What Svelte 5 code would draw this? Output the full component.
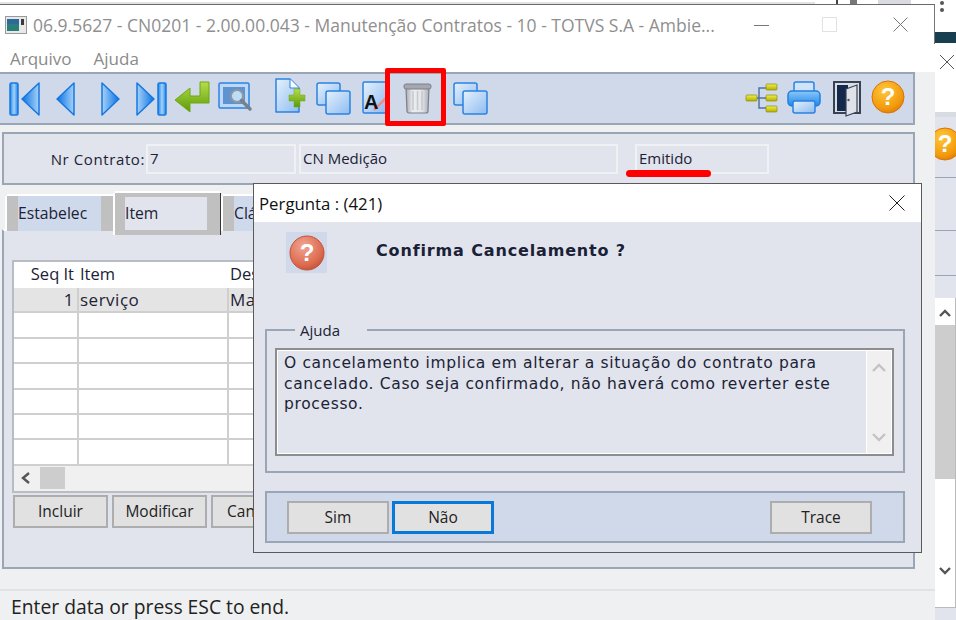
<script>
  const rows = [
    { seq: '1', item: 'serviço', desc: 'Ma', selected: true },
    { seq: '', item: '', desc: '' },
    { seq: '', item: '', desc: '' },
    { seq: '', item: '', desc: '' },
    { seq: '', item: '', desc: '' },
    { seq: '', item: '', desc: '' },
    { seq: '', item: '', desc: '' }
  ];
  const helpText = 'O cancelamento implica em alterar a situação do contrato para cancelado. Caso seja confirmado, não haverá como reverter este processo.';
</script>

<svg class="defs" width="0" height="0" aria-hidden="true">
  <defs>
    <linearGradient id="navL" x1="0" x2="1" y1="0" y2="0"><stop offset="0" stop-color="#0b72e6"/><stop offset="1" stop-color="#a6d2f7"/></linearGradient>
    <linearGradient id="navR" x1="0" x2="1" y1="0" y2="0"><stop offset="0" stop-color="#a6d2f7"/><stop offset="1" stop-color="#0b72e6"/></linearGradient>
    <linearGradient id="navB" x1="0" x2="1" y1="0" y2="0"><stop offset="0" stop-color="#1f86ea"/><stop offset=".5" stop-color="#a6d2f7"/><stop offset="1" stop-color="#1f86ea"/></linearGradient>
    <linearGradient id="paper" x1="0" x2="1" y1="0" y2="1"><stop offset="0" stop-color="#e6f1fc"/><stop offset="1" stop-color="#8dbcf1"/></linearGradient>
    <linearGradient id="green" x1="0" x2="0" y1="0" y2="1"><stop offset="0" stop-color="#b5de4a"/><stop offset="1" stop-color="#5c9a0a"/></linearGradient>
    <linearGradient id="can" x1="0" x2="1" y1="0" y2="0"><stop offset="0" stop-color="#a9acb4"/><stop offset=".3" stop-color="#ecedf0"/><stop offset=".7" stop-color="#e4e5e8"/><stop offset="1" stop-color="#a9acb4"/></linearGradient>
    <linearGradient id="print" x1="0" x2="0" y1="0" y2="1"><stop offset="0" stop-color="#8cc8f8"/><stop offset="1" stop-color="#1f86e8"/></linearGradient>
    <radialGradient id="orange" cx=".4" cy=".3" r=".8"><stop offset="0" stop-color="#ffc73a"/><stop offset=".7" stop-color="#f29a0c"/><stop offset="1" stop-color="#d9730a"/></radialGradient>
    <radialGradient id="redball" cx=".4" cy=".3" r=".8"><stop offset="0" stop-color="#f2a594"/><stop offset=".7" stop-color="#dc6a4e"/><stop offset="1" stop-color="#bb4a30"/></radialGradient>
    <linearGradient id="yellow" x1="0" x2="0" y1="0" y2="1"><stop offset="0" stop-color="#eef04a"/><stop offset="1" stop-color="#b5b000"/></linearGradient>
  </defs>
</svg>

<div class="desktop">
  <div class="top-strip">
    <span class="strip-line"></span>
    <span class="strip-a"></span>
    <span class="strip-b"></span>
    <span class="strip-c"></span>
  </div>

  <div class="back-window">
    <div class="back-top">
      <span class="dot"></span>
      <span class="dot"></span>
    </div>
    <div class="back-teal"></div>
    <div class="back-title">
      <svg width="16" height="16" viewBox="0 0 16 16"><path d="M1 1 15 15M15 1 1 15" stroke="#555" stroke-width="1" fill="none"/></svg>
    </div>
    <div class="back-panel">
      <svg class="back-help" width="34" height="34" viewBox="0 0 34 34">
        <circle cx="17" cy="17" r="16" fill="url(#orange)" stroke="#d9730a"/>
        <text x="17" y="25" text-anchor="middle" class="q">?</text>
      </svg>
    </div>
    <div class="back-panel short"></div>
    <div class="back-panel tiny"></div>
    <div class="back-scroll">
      <svg class="chev" width="12" height="8" viewBox="0 0 12 8"><path d="M1 7 6 2l5 5" stroke="#555" stroke-width="2.4" fill="none"/></svg>
      <div class="back-thumb"></div>
      <svg class="chev down" width="12" height="8" viewBox="0 0 12 8"><path d="M1 1l5 5 5-5" stroke="#555" stroke-width="2.4" fill="none"/></svg>
    </div>
  </div>

  <div class="window">
    <div class="titlebar">
      <svg class="app-icon" width="22" height="18" viewBox="0 0 22 18">
        <rect x=".5" y=".5" width="21" height="17" fill="#e8e8e8" stroke="#9a9a9a"/>
        <rect x="2" y="3" width="12" height="12" fill="#2b7f78"/>
        <rect x="2" y="3" width="12" height="5" fill="#2c6a9c"/>
        <rect x="16" y="3" width="3" height="6" fill="#3a3a3a"/>
      </svg>
      <span class="title-text">06.9.5627 - CN0201 - 2.00.00.043 - Manutenção Contratos - 10 - TOTVS S.A - Ambie...</span>
      <div class="win-controls">
        <svg width="15" height="16" viewBox="0 0 15 16"><path d="M0 8.5h15" stroke="#777" fill="none"/></svg>
        <svg width="15" height="16" viewBox="0 0 15 16"><rect x=".5" y=".5" width="14" height="14" stroke="#e2e2e2" fill="none"/></svg>
        <svg width="15" height="16" viewBox="0 0 15 16"><path d="M.5.5l14 14M14.5.5l-14 14" stroke="#777" fill="none"/></svg>
      </div>
    </div>
    <div class="menubar">
      <span>Arquivo</span>
      <span>Ajuda</span>
    </div>

    <div class="toolbar">
      <svg class="ico first" width="32" height="34" viewBox="0 0 32 34">
        <rect x="1" y="1" width="8" height="32" rx="1.5" fill="url(#navB)" stroke="#1478e2" stroke-width="1.5"/>
        <path d="M30 1v32L13 17Z" fill="url(#navL)" stroke="#1478e2" stroke-width="1.5" stroke-linejoin="round"/>
      </svg>
      <svg class="ico prev" width="20" height="34" viewBox="0 0 20 34">
        <path d="M18 1v32L1 17Z" fill="url(#navL)" stroke="#1478e2" stroke-width="1.5" stroke-linejoin="round"/>
      </svg>
      <svg class="ico next" width="20" height="34" viewBox="0 0 20 34">
        <path d="M2 1v32L19 17Z" fill="url(#navR)" stroke="#1478e2" stroke-width="1.5" stroke-linejoin="round"/>
      </svg>
      <svg class="ico last" width="32" height="34" viewBox="0 0 32 34">
        <path d="M2 1v32L19 17Z" fill="url(#navR)" stroke="#1478e2" stroke-width="1.5" stroke-linejoin="round"/>
        <rect x="23" y="1" width="8" height="32" rx="1.5" fill="url(#navB)" stroke="#1478e2" stroke-width="1.5"/>
      </svg>
      <svg class="ico enter" width="36" height="32" viewBox="0 0 36 32">
        <path d="M35 1v21H16v9L1 19 16 7v8h10V1Z" fill="url(#green)" stroke="#6fa80f" stroke-linejoin="round"/>
      </svg>
      <svg class="ico preview" width="35" height="30" viewBox="0 0 35 30">
        <rect x="1" y="1" width="30" height="25" rx="1.5" fill="#bcd8f6" stroke="#2a82e2" stroke-width="1.5"/>
        <rect x="5" y="5" width="22" height="17" fill="#5e93cf"/>
        <circle cx="19" cy="14" r="6" fill="#bfdcf7" stroke="#8d98a6" stroke-width="2"/>
        <path d="M23.5 18.5 32 27" stroke="#77808c" stroke-width="3.5" stroke-linecap="round"/>
      </svg>
      <svg class="ico newdoc" width="31" height="36" viewBox="0 0 31 36">
        <path d="M1 1h14l9 9v24H1Z" fill="url(#paper)" stroke="#2a82e2" stroke-width="1.5" stroke-linejoin="round"/>
        <path d="M15 1v9h9" fill="#fff" stroke="#2a82e2"/>
        <path d="M19 11h6v6h5v6h-5v6h-6v-6h-5v-6h5Z" fill="url(#green)" stroke="#6fa80f" stroke-width=".5"/>
      </svg>
      <svg class="ico copy" width="35" height="33" viewBox="0 0 35 33">
        <rect x="1" y="1" width="23" height="22" rx="2" fill="url(#paper)" stroke="#2a82e2" stroke-width="1.5"/>
        <rect x="10" y="9" width="24" height="23" rx="2" fill="url(#paper)" stroke="#2a82e2" stroke-width="1.5"/>
      </svg>
      <svg class="ico rename" width="26" height="33" viewBox="0 0 26 33">
        <rect x="1" y="1" width="23" height="31" rx="1.5" fill="url(#paper)" stroke="#2a82e2" stroke-width="1.5"/>
        <path d="M12 29 26 15" stroke="#f28a8a" stroke-width="2.5"/>
        <text x="2" y="28" class="a-letter">A</text>
      </svg>
      <svg class="ico trash" width="29" height="32" viewBox="0 0 29 32">
        <path d="M3 6h23l-1 23a2 2 0 0 1-2 2H6a2 2 0 0 1-2-2Z" fill="url(#can)" stroke="#7b8089" stroke-width="1.2"/>
        <path d="M10 9v19M14.5 9v19M19 9v19" stroke="#c6c8cd" stroke-width="1.5"/>
        <rect x="1" y="2" width="27" height="5" rx="2" fill="#a5a8ae" stroke="#7b8089"/>
      </svg>
      <svg class="ico copy2" width="35" height="33" viewBox="0 0 35 33">
        <rect x="1" y="1" width="23" height="22" rx="2" fill="url(#paper)" stroke="#2a82e2" stroke-width="1.5"/>
        <rect x="10" y="9" width="24" height="23" rx="2" fill="url(#paper)" stroke="#2a82e2" stroke-width="1.5"/>
      </svg>

      <svg class="ico tree" width="33" height="30" viewBox="0 0 33 30">
        <path d="M10 15h11M14 15V5h7M14 15v10h7" stroke="#4f74a8" stroke-width="1.5" fill="none"/>
        <rect x="1" y="12" width="11" height="6" rx="1" fill="url(#yellow)" stroke="#8d8a10" stroke-width=".7"/>
        <rect x="21" y="1" width="11" height="6" rx="1" fill="url(#yellow)" stroke="#8d8a10" stroke-width=".7"/>
        <rect x="21" y="12" width="11" height="6" rx="1" fill="url(#yellow)" stroke="#8d8a10" stroke-width=".7"/>
        <rect x="21" y="23" width="11" height="6" rx="1" fill="url(#yellow)" stroke="#8d8a10" stroke-width=".7"/>
      </svg>
      <svg class="ico printer" width="34" height="33" viewBox="0 0 34 33">
        <rect x="7" y="1" width="20" height="11" rx="2" fill="#cfe4fa" stroke="#2a82e2" stroke-width="1.5"/>
        <rect x="1" y="10" width="32" height="15" rx="4" fill="url(#print)" stroke="#1f7fe0" stroke-width="1.5"/>
        <rect x="6" y="20" width="22" height="12" rx="2" fill="url(#paper)" stroke="#2a82e2" stroke-width="1.5"/>
      </svg>
      <svg class="ico door" width="28" height="36" viewBox="0 0 28 36">
        <rect x="1" y="1" width="26" height="31" fill="#d9dde5" stroke="#3a4252" stroke-width="2"/>
        <rect x="4" y="4" width="11" height="26" fill="#14284c"/>
        <path d="M13 8 24 4v27l-11 4Z" fill="#dfe2e8" stroke="#3a4252" stroke-width="1.2"/>
        <circle cx="15.5" cy="19" r="1.2" fill="#555"/>
      </svg>
      <svg class="ico helpbtn" width="34" height="34" viewBox="0 0 34 34">
        <circle cx="17" cy="17" r="16" fill="url(#orange)" stroke="#d9730a"/>
        <text x="17" y="25" text-anchor="middle" class="q">?</text>
      </svg>
    </div>

    <div class="header-panel">
      <span class="field-label">Nr Contrato:</span>
      <div class="field f-number">7</div>
      <div class="field f-desc">CN Medição</div>
      <div class="field f-status">Emitido</div>
    </div>

    <div class="tabs-area">
      <div class="tabs">
        <div class="tab">Estabelec</div>
        <div class="tab active">Item</div>
        <div class="tab clipped">Clá</div>
      </div>
      <div class="tab-panel">
        <div class="grid-table">
          <div class="grid-row head">
            <div class="cell num">Seq It</div>
            <div class="cell">Item</div>
            <div class="cell">Des</div>
          </div>
          {#each rows as row}
            <div class="grid-row" class:selected={row.selected}>
              <div class="cell num">{row.seq}</div>
              <div class="cell">{row.item}</div>
              <div class="cell">{row.desc}</div>
            </div>
          {/each}
          <div class="hscroll">
            <svg width="12" height="12" viewBox="0 0 12 12"><path d="M9 1 3 6l6 5" stroke="#555" stroke-width="2.4" fill="none"/></svg>
            <div class="hthumb"></div>
          </div>
        </div>
        <div class="panel-buttons">
          <button>Incluir</button>
          <button>Modificar</button>
          <button class="cut">Can</button>
        </div>
      </div>
    </div>

    <div class="status">Enter data or press ESC to end.</div>
  </div>

  <div class="annot-box"></div>
  <div class="annot-line"></div>

  <div class="dialog">
    <div class="dialog-title">
      <span>Pergunta : (421)</span>
      <svg width="16" height="16" viewBox="0 0 16 16"><path d="M.5.5l15 15M15.5.5l-15 15" stroke="#222" fill="none"/></svg>
    </div>
    <div class="dialog-body">
      <div class="question">
        <div class="q-icon">
          <svg width="36" height="36" viewBox="0 0 36 36">
            <circle cx="18" cy="18" r="17" fill="url(#redball)" stroke="#c25236"/>
            <text x="18" y="26" text-anchor="middle" class="q">?</text>
          </svg>
        </div>
        <b>Confirma Cancelamento ?</b>
      </div>
      <fieldset class="help-group">
        <legend>Ajuda</legend>
        <div class="help-box">
          <p>{helpText}</p>
          <div class="vscroll">
            <svg width="14" height="9" viewBox="0 0 14 9"><path d="M1 8 7 2l6 6" stroke="#c4c4c4" stroke-width="2.4" fill="none"/></svg>
            <svg width="14" height="9" viewBox="0 0 14 9"><path d="M1 1l6 6 6-6" stroke="#c4c4c4" stroke-width="2.4" fill="none"/></svg>
          </div>
        </div>
      </fieldset>
      <div class="dialog-buttons">
        <button>Sim</button>
        <button class="focused">Não</button>
        <button class="trace">Trace</button>
      </div>
    </div>
  </div>
</div>

<style>
  :global(body) {
    margin: 0;
    background: #fff;
  }

  .defs {
    position: absolute;
  }

  .desktop {
    position: relative;
    width: 956px;
    height: 620px;
    overflow: hidden;
    background: #fff;
    color: #1c2236;
    font-family: "DejaVu Sans", sans-serif;
  }

  /* bits of other windows above the main one */
  .top-strip {
    height: 4px;
    display: flex;
  }

  .strip-line {
    width: 815px;
    height: 2px;
    margin-top: 2px;
    background: #e2e2e2;
  }

  .strip-a {
    width: 2px;
    margin-left: 21px;
    background: #444;
  }

  .strip-b {
    width: 7px;
    margin-left: 12px;
    background: #777;
  }

  .strip-c {
    width: 33px;
    margin-left: 21px;
    background: #d9dbde;
  }

  /* window behind the main one */
  .back-window {
    position: absolute;
    left: 935px;
    top: 0;
    width: 21px;
    height: 620px;
    display: flex;
    flex-direction: column;
    background: #e1e4ec;
  }

  .back-top {
    height: 32px;
    background: #fff;
    display: flex;
    flex-direction: column;
    align-items: center;
    padding: 1px 8px 0 0;
    box-sizing: border-box;
    gap: 3px;
  }

  .dot {
    width: 4px;
    height: 4px;
    border-radius: 50%;
    background: #555;
  }

  .back-teal {
    height: 11px;
    background: #173f50;
  }

  .back-title {
    height: 69px;
    background: #fff;
    padding: 11px 0 0 4px;
    box-sizing: border-box;
  }

  .back-panel {
    height: 66px;
    background: #e1e4ec;
    border-bottom: 1px solid #9aa5b5;
    border-top: 5px solid #d8dbe2;
    box-sizing: border-box;
    position: relative;
  }

  .back-panel.short {
    height: 53px;
    border-top: none;
  }

  .back-panel.tiny {
    height: 45px;
    border-top: none;
  }

  .back-help {
    position: absolute;
    left: -7px;
    top: 10px;
  }

  .back-scroll {
    flex: 0 0 310px;
    background: #fff;
    border-right: 1px solid #bbb;
    display: flex;
    flex-direction: column;
    align-items: center;
    margin-top: 22px;
    box-sizing: border-box;
    padding-top: 11px;
    border-bottom: 1px solid #bbb;
  }

  .back-thumb {
    width: 100%;
    height: 154px;
    margin-top: 8px;
    background: #cdcdcd;
  }

  .chev.down {
    margin-top: 88px;
  }

  .q {
    font: bold 24px "Liberation Sans", sans-serif;
    fill: #fff;
  }

  .a-letter {
    font: bold 20px "Liberation Sans", sans-serif;
    fill: #111;
  }

  /* main window */
  .window {
    position: absolute;
    left: 0;
    top: 4px;
    width: 935px;
    height: 616px;
    border-top: 1px solid #6a6a6a;
    box-sizing: border-box;
    background: #eff0f1;
    display: flex;
    flex-direction: column;
    font-family: "DejaVu Sans", sans-serif;
  }

  .titlebar {
    height: 39px;
    box-sizing: border-box;
    background: #fff;
    border-right: 1px solid #777;
    display: flex;
    align-items: center;
    padding: 0 26px 0 5px;
    flex-shrink: 0;
  }

  .app-icon {
    margin-right: 6px;
  }

  .title-text {
    font: 17.5px "Open Sans", sans-serif;
    color: #8f8f8f;
    white-space: nowrap;
    flex: 1;
  }

  .win-controls {
    display: flex;
    gap: 53px;
    align-items: center;
  }

  .win-controls svg:last-child {
    margin-left: 3px;
  }

  .menubar {
    height: 28px;
    background: #fff;
    display: flex;
    gap: 22px;
    padding-left: 10px;
    align-items: center;
    font: 17px "Open Sans", sans-serif;
    color: #8a8a8a;
    flex-shrink: 0;
  }

  .toolbar {
    height: 53px;
    width: 915px;
    box-sizing: border-box;
    background: #d0d9ea;
    border: 2px solid #9aa5b5;
    border-left: none;
    display: flex;
    align-items: center;
    flex-shrink: 0;
  }

  .ico {
    flex-shrink: 0;
  }

  .first { margin-left: 9px; }
  .prev { margin-left: 15px; }
  .next { margin-left: 24px; }
  .last { margin-left: 15px; }
  .enter { margin-left: 7px; margin-bottom: 3px; }
  .preview { margin-left: 8px; margin-bottom: 3px; }
  .newdoc { margin-left: 22px; margin-bottom: 5px; }
  .copy { margin-left: 10px; }
  .rename { margin-left: 11px; margin-bottom: 2px; }
  .trash { margin-left: 15px; margin-bottom: 2px; }
  .copy2 { margin-left: 21px; }
  .tree { margin-left: auto; margin-bottom: 2px; }
  .printer { margin-left: 9px; margin-bottom: 2px; }
  .door { margin-left: 12px; }
  .helpbtn { margin-left: 10px; margin-right: 8px; margin-bottom: 3px; }

  .header-panel {
    margin: 7px 0 0 2px;
    width: 913px;
    height: 53px;
    box-sizing: border-box;
    background: #e1e4ec;
    border: 2px solid #9aa5b5;
    display: flex;
    align-items: center;
    flex-shrink: 0;
    font-family: "Open Sans", sans-serif;
  }

  .field-label {
    width: 142px;
    box-sizing: border-box;
    padding-right: 1px;
    text-align: right;
    font-size: 15px;
    letter-spacing: .6px;
  }

  .field {
    height: 30px;
    box-sizing: border-box;
    border: 2px solid #f0f1f5;
    padding-left: 2px;
    line-height: 24px;
    font-size: 15px;
  }

  .f-number { width: 150px; }
  .f-desc { width: 319px; margin-left: 3px; }
  .f-status { width: 134px; margin-left: 17px; }

  .tabs-area {
    position: relative;
    flex-shrink: 0;
    margin-top: 8px;
    height: 376px;
  }

  .tabs {
    position: absolute;
    left: 7px;
    top: 0;
    display: flex;
    z-index: 1;
    font-size: 15.7px;
    font-family: "Open Sans", sans-serif;
  }

  .tab {
    width: 106px;
    height: 35px;
    margin-top: 3px;
    box-sizing: border-box;
    background: #cfd9ec;
    border: solid #c0c0c0;
    border-width: 0 12px 0 11px;
    box-shadow: 0 -2px 0 #fff, -2px 0 0 #fff, 1px 0 0 #333;
    line-height: 35px;
    white-space: nowrap;
    overflow: hidden;
    margin-right: 2px;
  }

  .tab.active {
    height: 42px;
    margin-top: 0;
    background: #e1e4ec;
    border-width: 4px 13px 5px 10px;
    line-height: 33px;
    width: 105px;
    margin-right: 3px;
  }

  .tab-panel {
    position: absolute;
    left: 2px;
    top: 36px;
    width: 913px;
    height: 340px;
    box-sizing: border-box;
    background: #e1e4ec;
    border: 2px solid #9aa5b5;
    border-top-color: #fff;
    padding: 29px 0 0 8px;
    font-family: "Open Sans", sans-serif;
  }

  .grid-table {
    width: 600px;
    background: #fff;
    border: 2px solid #b8bcc4;
    border-right: none;
    box-sizing: border-box;
    font-size: 17px;
    letter-spacing: .5px;
  }

  .grid-row {
    display: grid;
    grid-template-columns: 65px 150px 1fr;
    height: 25.4px;
    box-sizing: border-box;
    border-bottom: 2px solid #cfcfcf;
  }

  .grid-row.head {
    height: 26px;
    border-bottom: 2px solid #fff;
    font-size: 16.5px;
    letter-spacing: 0;
  }

  .grid-row.selected {
    background: #e4e4e4;
  }

  .cell {
    border-right: 2px solid #cfcfcf;
    padding-left: 1px;
    line-height: 23px;
    white-space: nowrap;
    overflow: hidden;
  }

  .head .cell {
    border-right-color: #fff;
  }

  .cell.num {
    text-align: right;
    padding-right: 3px;
  }

  .hscroll {
    height: 25px;
    background: #f0f0f0;
    display: flex;
    align-items: center;
    padding-left: 6px;
    gap: 8px;
  }

  .hthumb {
    width: 25px;
    height: 22px;
    background: #cdcdcd;
  }

  .panel-buttons {
    display: flex;
    gap: 4px;
    margin: 2px 0 0 1px;
  }

  button {
    width: 95px;
    height: 33px;
    padding: 0;
    box-sizing: border-box;
    background: #e1e1e1;
    border: 2px solid #adadad;
    color: #222;
    font: 15.5px "Open Sans", sans-serif;
  }

  button.cut {
    text-align: left;
    padding-left: 14px;
  }

  .status {
    margin-top: 20px;
    border-top: 2px solid #e2e2e2;
    padding: 5px 0 0 11px;
    font: 19.3px/22px "Open Sans", sans-serif;
    color: #222;
    white-space: nowrap;
  }

  /* annotations drawn on the screenshot */
  .annot-box {
    position: absolute;
    left: 385px;
    top: 68px;
    width: 61px;
    height: 58px;
    box-sizing: border-box;
    border: 5px solid #fe0000;
    border-radius: 2px;
  }

  .annot-line {
    position: absolute;
    left: 626px;
    top: 170px;
    width: 85px;
    height: 7px;
    border-radius: 4px;
    background: #fe0000;
  }

  /* dialog over the main window */
  .dialog {
    position: absolute;
    z-index: 5;
    left: 253px;
    top: 183px;
    width: 669px;
    height: 370px;
    box-sizing: border-box;
    border: 1px solid #5a5a5a;
    background: #e1e4ec;
    display: flex;
    flex-direction: column;
  }

  .dialog-title {
    height: 38px;
    flex-shrink: 0;
    background: #fff;
    display: flex;
    align-items: center;
    justify-content: space-between;
    padding: 0 16px 0 5px;
    font: 16.8px "Open Sans", sans-serif;
    color: #111;
  }

  .dialog-body {
    flex: 1;
    padding: 10px 16px 9px 11px;
    display: flex;
    flex-direction: column;
  }

  .question {
    display: flex;
    align-items: flex-start;
    height: 88px;
    flex-shrink: 0;
    padding-left: 21px;
  }

  .question b {
    margin: 9px 0 0 49px;
    font: bold 16px "DejaVu Sans", sans-serif;
    letter-spacing: .85px;
    color: #1a2036;
  }

  .q-icon {
    width: 41px;
    height: 41px;
    background: #d0d9ea;
    display: flex;
    align-items: center;
    justify-content: center;
  }

  .help-group {
    margin: 0;
    padding: 8px 9px 0 8px;
    height: 153px;
    box-sizing: border-box;
    flex-shrink: 0;
    border: 2px solid #9aa5b5;
  }

  legend {
    margin-left: 20px;
    padding: 0 27px 0 5px;
    font: 15px "Open Sans", sans-serif;
  }

  .help-box {
    height: 108px;
    box-sizing: border-box;
    border: 2px solid #8d8d8d;
    box-shadow: inset 0 0 0 1px #fff;
    display: flex;
    background: #e1e4ec;
  }

  .help-box p {
    flex: 1;
    margin: 0;
    padding: 3px 12px 0 7px;
    font: 15.5px/20.5px "DejaVu Sans", sans-serif;
    letter-spacing: .65px;
  }

  .vscroll {
    width: 25px;
    margin: 1px;
    background: #f0f0f0;
    border-left: 1px solid #fff;
    display: flex;
    flex-direction: column;
    justify-content: space-between;
    align-items: center;
    padding: 12px 0 11px;
    box-sizing: border-box;
  }

  .dialog-buttons {
    margin-top: 18px;
    height: 52px;
    box-sizing: border-box;
    background: #d0d9ea;
    border: 2px solid #9aa5b5;
    display: flex;
    align-items: center;
    padding-left: 20px;
    gap: 3px;
  }

  .dialog-buttons button {
    width: 102px;
    height: 33px;
  }

  .dialog-buttons button.focused {
    border: 3px solid #0a78d7;
  }

  .dialog-buttons button.trace {
    margin-left: auto;
    margin-right: 31px;
  }
</style>
